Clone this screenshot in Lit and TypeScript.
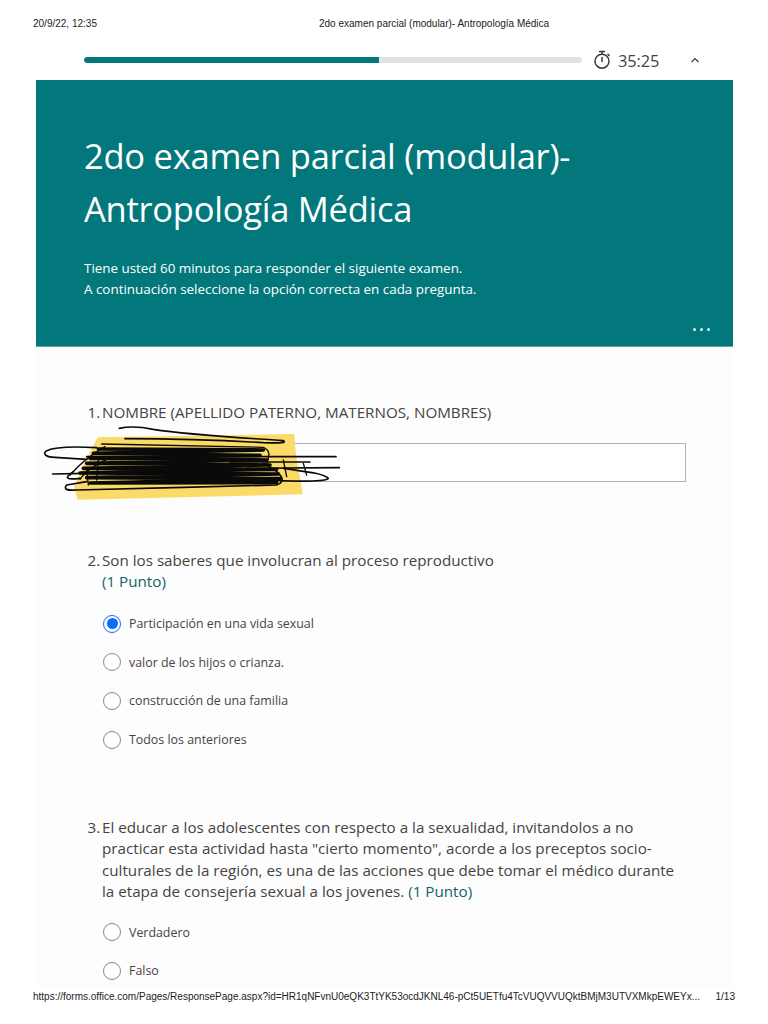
import { LitElement, html, css, svg } from "lit";
import { customElement } from "lit/decorators.js";

const scribble = svg`
<svg class="scribble" viewBox="0 0 1020 330" width="340" height="110" aria-hidden="true">
  <path d="M205 115 L790 105 L795 165 L815 280 L145 296 L135 262 L170 180 Z" fill="#fbdb68" stroke="#fbdb68" stroke-width="6" stroke-linejoin="round"/>
  <g fill="none" stroke="#0a0a0a" stroke-linecap="round" stroke-linejoin="round">
    <path stroke-width="5" d="M268 85 C300 78 330 80 370 88 C480 105 620 112 760 122 C770 128 755 130 700 128 C600 122 400 116 285 116"/>
    <path stroke-width="5" d="M200 143 C150 140 80 138 50 152 C35 162 50 172 75 172 L170 178"/>
    <path stroke-width="5" d="M170 170 L918 170 M650 205 L928 203 M68 222 L170 220 M600 186 L840 186"/>
    <path stroke-width="5" d="M130 215 C100 235 110 240 150 235 M170 245 L110 255 C100 268 110 272 140 270 L460 262 L740 255 C770 245 760 220 700 190"/>
    <path stroke-width="5" d="M700 240 C800 245 890 245 895 235 C880 220 830 215 760 205"/>
    <path stroke-width="4" d="M215 132 L700 142 C720 150 720 165 710 190 M760 180 L770 230 M820 190 L830 225"/>
    <path stroke-width="11" d="M205 147 L700 150 L190 160 L690 166 L180 175 L710 180 L170 190 L720 195 L160 205 L740 208 L150 219 L745 222 L170 233 L750 236 L180 249 L740 248"/>
    <path stroke-width="4" d="M120 225 C160 180 190 160 225 140 M150 238 C170 210 200 190 250 170 M200 240 L205 180 M175 255 L170 210"/>
  </g>
</svg>`;

interface Opt { label: string; on?: boolean; }

@customElement("app-root")
export class AppRoot extends LitElement {
  static styles = css`
    :host { display: block; width: 768px; height: 1024px; background: #fff; font-family: "Open Sans", "Noto Sans", sans-serif; color: #454443; overflow: hidden; position: relative; }
    .print { font-family: "Liberation Sans", Arial, sans-serif; font-size: 10px; color: #222; white-space: nowrap; }
    .head { display: flex; padding: 18px 0 0 33px; height: 44px; box-sizing: border-box; line-height: 12px; }
    .date { width: 286px; }
    .progress { display: flex; align-items: center; height: 32px; padding-left: 84px; }
    .track { width: 498px; height: 6px; border-radius: 3px; background: #e1e1e1; overflow: hidden; }
    .fill { height: 100%; background: #03787c; border-radius: 3px 0 0 3px; }
    .clock { margin-left: 11px; display: block; }
    .time { margin-left: 7px; font-size: 16.4px; width: 58px; letter-spacing: -0.1px; }
    .chev { margin-left: 14px; display: block; }
    .main { margin: 4px 35px 0 36px; height: 908px; background: #fdfdfd; overflow: hidden; }
    .banner { background: #03787c; color: #fff; height: 267px; box-sizing: border-box; padding: 49px 48px 0; position: relative; border-bottom: 1px solid #5fa9ab; }
    h1 { margin: 0; font-weight: 400; font-size: 34.5px; line-height: 53px; letter-spacing: -0.25px; width: 600px; }
    .desc { margin: 23px 0 0; font-size: 13.4px; line-height: 20.5px; }
    .dots { position: absolute; right: 23px; bottom: 15px; display: flex; gap: 4px; }
    .dots i { width: 3px; height: 3px; border-radius: 50%; background: #e6f2f2; display: block; }
    .q { display: grid; grid-template-columns: 14px 1fr; padding: 0 52px; font-size: 15.2px; line-height: 21.5px; }
    .num { margin-left: -0.5px; white-space: nowrap; }
    .pts { color: #0f6468; }
    .q1 { margin-top: 55px; }
    .input { height: 39px; box-sizing: border-box; border: 1px solid #b3b0ad; margin: 19px 47px 0 66px; background: #fff; }
    .q2 { margin-top: 68px; }
    .q3 { margin-top: 58px; }
    .opts { padding-left: 67px; display: flex; flex-direction: column; margin-top: 12px; }
    .opt { display: flex; align-items: center; gap: 8px; height: 38.6px; font-size: 12.4px; }
    .radio { width: 18px; height: 18px; box-sizing: border-box; border-radius: 50%; border: 1.3px solid #8a8886; background: #fff; display: flex; align-items: center; justify-content: center; flex: none; }
    .radio.on { border: 1.5px solid #0f6cf0; }
    .radio.on i { width: 11px; height: 11px; background: #0b6cff; border-radius: 50%; display: block; }
    .q3opts { margin-top: 10px; }
    .foot { display: flex; justify-content: space-between; padding: 3px 33px 0 33px; line-height: 12px; height: 14px; }
    .scribble { position: absolute; left: 30px; top: 400px; }
  `;

  private opts(list: Opt[], extra = "") {
    return html`<div class="opts ${extra}">${list.map(o => html`
      <div class="opt"><span class="radio ${o.on ? "on" : ""}">${o.on ? html`<i></i>` : ""}</span><span>${o.label}</span></div>`)}</div>`;
  }

  render() {
    return html`
      <div class="head print">
        <span class="date">20/9/22, 12:35</span>
        <span>2do examen parcial (modular)- Antropología Médica</span>
      </div>
      <div class="progress">
        <div class="track"><div class="fill" style="width:59.2%"></div></div>
        <svg class="clock" width="18" height="20" viewBox="0 0 18 20" fill="none" stroke="#3b3a39" stroke-width="1.5" stroke-linecap="round">
          <circle cx="9" cy="11.2" r="7"/>
          <path d="M6.5 1.6h5M9 1.6v2.6M9 7.5v4M15 4.4l1 1"/>
        </svg>
        <span class="time">35:25</span>
        <svg class="chev" width="10" height="6" viewBox="0 0 10 6" fill="none" stroke="#3b3a39" stroke-width="1.2"><path d="M1.5 5 5 1.5 8.5 5"/></svg>
      </div>
      <div class="main">
        <div class="banner">
          <h1>2do examen parcial (modular)-<br>Antropología Médica</h1>
          <p class="desc">Tiene usted 60 minutos para responder el siguiente examen.<br>A continuación seleccione la opción correcta en cada pregunta.</p>
          <div class="dots"><i></i><i></i><i></i></div>
        </div>
        <div class="q q1"><span class="num">1.</span><span>NOMBRE (APELLIDO PATERNO, MATERNOS, NOMBRES)</span></div>
        <div class="input"></div>
        <div class="q q2"><span class="num">2.</span><span>Son los saberes que involucran al proceso reproductivo<br><span class="pts">(1 Punto)</span></span></div>
        ${this.opts([{ label: "Participación en una vida sexual", on: true }, { label: "valor de los hijos o crianza." }, { label: "construcción de una familia" }, { label: "Todos los anteriores" }])}
        <div class="q q3"><span class="num">3.</span><span>El educar a los adolescentes con respecto a la sexualidad, invitandolos a no<br>practicar esta actividad hasta "cierto momento", acorde a los preceptos socio-<br>culturales de la región, es una de las acciones que debe tomar el médico durante<br>la etapa de consejería sexual a los jovenes. <span class="pts">(1 Punto)</span></span></div>
        ${this.opts([{ label: "Verdadero" }, { label: "Falso" }], "q3opts")}
      </div>
      <div class="foot print">
        <span>https://forms.office.com/Pages/ResponsePage.aspx?id=HR1qNFvnU0eQK3TtYK53ocdJKNL46-pCt5UETfu4TcVUQVVUQktBMjM3UTVXMkpEWEYx...</span>
        <span>1/13</span>
      </div>
      ${scribble}
    `;
  }
}
